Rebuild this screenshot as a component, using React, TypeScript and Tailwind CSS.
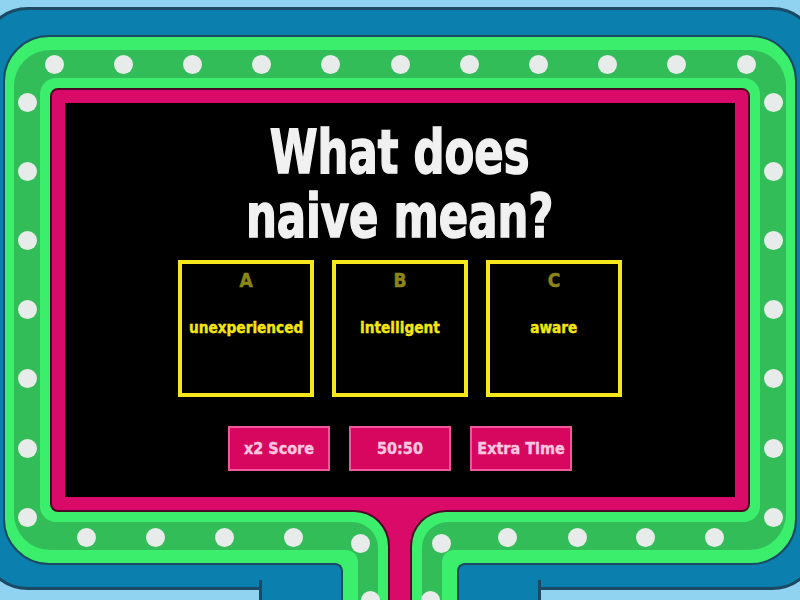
import type { CSSProperties } from "react";

const frameDark = "border-[#1c4a64]";

// dot centres along the frame
const dots: [number, number][] = [
  ...Array.from({ length: 11 }, (_, i) => [54 + i * 69.2, 64] as [number, number]),
  ...Array.from({ length: 7 }, (_, i) => [27, 102 + i * 69.2] as [number, number]),
  ...Array.from({ length: 7 }, (_, i) => [773, 102 + i * 69.2] as [number, number]),
  [86, 537],
  [155, 537],
  [224, 537],
  [293, 537],
  [360, 543],
  [441, 543],
  [507, 537],
  [577, 537],
  [645, 537],
  [714, 537],
  [370, 600],
  [430, 600],
];

const answers = [
  { letter: "A", text: "unexperienced" },
  { letter: "B", text: "intelligent" },
  { letter: "C", text: "aware" },
];

const powerUps = ["x2 Score", "50:50", "Extra Time"];

const App = () => {
  return (
    <div className="relative h-[600px] w-[800px] overflow-hidden bg-[#8fd3f1] pt-[7px] font-['Liberation_Sans_Narrow','DejaVu_Sans_Condensed','Liberation_Sans',sans-serif]">
      {/* blue outer ring */}
      <div
        className={`-mx-[20px] h-[583px] rounded-[48px] border-[3px] ${frameDark} bg-[#0b7fae] px-[20px] pt-[25px] pb-[22px]`}
      >
        {/* green ring */}
        <div
          className={`h-full rounded-[46px] border-2 ${frameDark} bg-[#3bee6b] px-[9px] py-[13px]`}
        >
          <div className="h-full rounded-[36px] bg-[#33bd58] px-[26px] py-[28px]">
            <div className="h-full rounded-[16px] bg-[#3bee6b] p-[10px]">
              {/* pink screen border */}
              <div className="h-full rounded-[8px] border-2 border-[#4a0a24] bg-[#da0a69] p-[13px]">
                <div className="flex h-full flex-col items-center bg-black pt-[17px]">
                  <h1 className="scale-x-[0.79] text-center text-[61px] leading-[64px] font-bold text-[#f1f1f1] [-webkit-text-stroke:1.5px_#f1f1f1]">
                    What does
                    <br />
                    naive mean?
                  </h1>

                  <div className="mt-[12px] flex gap-[18px]">
                    {answers.map((answer) => (
                      <div
                        key={answer.letter}
                        className="flex h-[137px] w-[136px] flex-col items-center border-4 border-[#f6e71c] pt-[4px]"
                      >
                        <span className="text-[19px] leading-[24px] font-bold text-[#8c8614] [-webkit-text-stroke:0.5px_#8c8614]">
                          {answer.letter}
                        </span>
                        <span className="mt-[26px] scale-x-[0.95] text-[16px] leading-[20px] font-bold text-[#f4e710] [-webkit-text-stroke:0.4px_#f4e710]">
                          {answer.text}
                        </span>
                      </div>
                    ))}
                  </div>

                  <div className="mt-[29px] flex gap-[19px]">
                    {powerUps.map((label) => (
                      <div
                        key={label}
                        className="flex h-[45px] w-[102px] items-center justify-center border-2 border-[#f0589d] bg-[#d7075f] text-[16px] font-bold text-[#fbc6df] [-webkit-text-stroke:0.4px_#fbc6df]"
                      >
                        {label}
                      </div>
                    ))}
                  </div>
                </div>
              </div>
            </div>
          </div>
        </div>
      </div>

      {/* stand: blue patch below the frame */}
      <div
        className={`absolute top-[580px] left-[259px] h-[20px] w-[282px] border-x-[3px] ${frameDark} bg-[#0b7fae]`}
      />

      {/* pink stem */}
      <div className="absolute top-[505px] left-[350px] h-[95px] w-[100px] bg-[#da0a69]" />

      {/* left bend of the frame */}
      <div className="absolute top-[510px] left-[300px] h-[120px] w-[90px] rounded-tr-[36px] border-t-2 border-r-2 border-[#4a0a24] bg-[#3bee6b] pt-[10px] pr-[10px]">
        <div className="h-full rounded-tr-[26px] bg-[#33bd58] pt-[28px] pr-[20px]">
          <div className="h-full rounded-tr-[12px] bg-[#3bee6b] pt-[13px] pr-[15px]">
            <div
              className={`h-full rounded-tr-[8px] border-t-2 border-r-2 ${frameDark} bg-[#0b7fae]`}
            />
          </div>
        </div>
      </div>

      {/* right bend of the frame */}
      <div className="absolute top-[510px] left-[410px] h-[120px] w-[90px] rounded-tl-[36px] border-t-2 border-l-2 border-[#4a0a24] bg-[#3bee6b] pt-[10px] pl-[10px]">
        <div className="h-full rounded-tl-[26px] bg-[#33bd58] pt-[28px] pl-[20px]">
          <div className="h-full rounded-tl-[12px] bg-[#3bee6b] pt-[13px] pl-[15px]">
            <div
              className={`h-full rounded-tl-[8px] border-t-2 border-l-2 ${frameDark} bg-[#0b7fae]`}
            />
          </div>
        </div>
      </div>

      {dots.map(([x, y], i) => {
        const style: CSSProperties = { left: x - 9.5, top: y - 9.5 };
        return (
          <div
            key={i}
            className="absolute h-[19px] w-[19px] rounded-full bg-[#e7ebe9]"
            style={style}
          />
        );
      })}
    </div>
  );
};

export default App;
